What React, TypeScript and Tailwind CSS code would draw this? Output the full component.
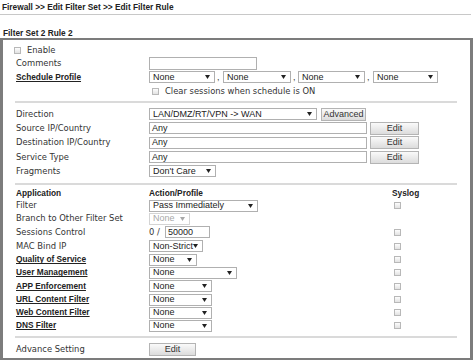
import React from 'react';

const Arrow: React.FC<{ muted?: boolean }> = ({ muted }) => (
  <svg width="5" height="4" viewBox="0 0 5 4" className="shrink-0">
    <path d="M0 0h5L2.5 4z" fill={muted ? '#a8a8a8' : '#222'} />
  </svg>
);

const Select: React.FC<{ value: string; className: string; muted?: boolean }> = ({ value, className, muted }) => (
  <div
    className={`flex items-center justify-between h-[12px] border bg-white pl-[3px] pr-[4px] font-['Liberation_Sans'] text-[9px] leading-none ${
      muted ? 'border-[#d4d4d4] text-[#a8a8a8]' : 'border-[#b0b0b0] text-[#222]'
    } ${className}`}
  >
    <span>{value}</span>
    <Arrow muted={muted} />
  </div>
);

const TextBox: React.FC<{ value?: string; className: string }> = ({ value, className }) => (
  <div
    className={`flex items-center h-[12px] border border-[#b0b0b0] bg-white pl-[2px] font-['Liberation_Sans'] text-[9px] leading-none text-[#222] ${className}`}
  >
    {value}
  </div>
);

const Button: React.FC<{ text: string; className: string }> = ({ text, className }) => (
  <div
    className={`flex items-center justify-center h-[13px] border border-[#b4b4b4] bg-gradient-to-b from-[#fafafa] to-[#dcdcdc] font-['Liberation_Sans'] text-[9px] leading-none text-[#333] ${className}`}
  >
    {text}
  </div>
);

const Check: React.FC = () => (
  <span className="block w-[7px] h-[7px] shrink-0 border border-[#b8b8b8] bg-gradient-to-b from-[#fdfdfd] to-[#e2e2e2]" />
);

const Label: React.FC<{ children: React.ReactNode; strong?: boolean }> = ({ children, strong }) => (
  <div
    className={`w-[133px] shrink-0 ${
      strong ? "font-['Liberation_Sans'] font-bold underline text-[8.3px] text-[#222]" : ''
    }`}
  >
    {children}
  </div>
);

const Row: React.FC<{ h: string; children: React.ReactNode }> = ({ h, children }) => (
  <div className={`flex items-center pl-[13px] ${h}`}>{children}</div>
);

const Divider: React.FC<{ m: string }> = ({ m }) => <div className={`ml-[12px] w-[442px] h-[2px] bg-[#dadada] ${m}`} />;

const Syslog: React.FC = () => (
  <div className="pl-[2px]">
    <Check />
  </div>
);

const appRows: { label: string; strong?: boolean; h: string; control: React.ReactNode; log: boolean }[] = [
  { label: 'Filter', h: 'h-[13px]', control: <Select value="Pass Immediately" className="w-[109px]" />, log: true },
  { label: 'Branch to Other Filter Set', h: 'h-[13px]', control: <Select value="None" muted className="w-[41px]" />, log: false },
  {
    label: 'Sessions Control',
    h: 'h-[14px]',
    control: (
      <div className="flex items-center">
        <span className="w-[16px]">0 /</span>
        <TextBox value="50000" className="w-[45px]" />
      </div>
    ),
    log: true,
  },
  { label: 'MAC Bind IP', h: 'h-[14px]', control: <Select value="Non-Strict" className="w-[54px]" />, log: true },
  { label: 'Quality of Service', strong: true, h: 'h-[13px]', control: <Select value="None" className="w-[48px]" />, log: true },
  { label: 'User Management', strong: true, h: 'h-[13px]', control: <Select value="None" className="w-[88px]" />, log: true },
  { label: 'APP Enforcement', strong: true, h: 'h-[14px]', control: <Select value="None" className="w-[63px]" />, log: true },
  { label: 'URL Content Filter', strong: true, h: 'h-[13px]', control: <Select value="None" className="w-[63px]" />, log: true },
  { label: 'Web Content Filter', strong: true, h: 'h-[13px]', control: <Select value="None" className="w-[63px]" />, log: true },
  { label: 'DNS Filter', strong: true, h: 'h-[13px]', control: <Select value="None" className="w-[63px]" />, log: true },
];

export default function App() {
  return (
    <div className="w-[474px] h-[362px] overflow-hidden bg-white font-['DejaVu_Sans'] text-[8.4px] leading-none text-[#333]">
      {/* Breadcrumb */}
      <div className="h-[14px] pl-[2px] flex items-center font-['Liberation_Sans'] font-bold text-[8.3px] text-[#222]">
        Firewall &gt;&gt; Edit Filter Set &gt;&gt; Edit Filter Rule
      </div>
      <div className="w-[471px] h-px bg-[#c8c8c8]" />
      <div className="h-[23px] pl-[3px] flex items-end pb-[1px] font-['Liberation_Sans'] font-bold text-[8.3px] text-[#222]">
        Filter Set 2 Rule 2
      </div>

      <div className="w-[473px] border-x-[3px] border-y-2 border-[#7c7c7c] pt-[3px] pb-[1px]">
        <div className="flex items-center h-[14px] pl-[11px]">
          <Check />
          <span className="ml-[6px]">Enable</span>
        </div>
        <Row h="h-[13px]">
          <Label>Comments</Label>
          <TextBox className="w-[108px] h-[13px]" />
        </Row>
        <Row h="h-[14px]">
          <Label strong>Schedule Profile</Label>
          <Select value="None" className="w-[66px]" />
          <span className="w-[8px] pl-[2px] font-['Liberation_Sans'] text-[9px]">,</span>
          <Select value="None" className="w-[68px]" />
          <span className="w-[7px] pl-[2px] font-['Liberation_Sans'] text-[9px]">,</span>
          <Select value="None" className="w-[67px]" />
          <span className="w-[8px] pl-[2px] font-['Liberation_Sans'] text-[9px]">,</span>
          <Select value="None" className="w-[65px]" />
        </Row>
        <Row h="h-[14px]">
          <div className="w-[136px] shrink-0" />
          <Check />
          <span className="ml-[6px]">Clear sessions when schedule is ON</span>
        </Row>

        <Divider m="mt-[3px]" />

        <div className="mt-[4px]">
          <Row h="h-[14px]">
            <Label>Direction</Label>
            <Select value="LAN/DMZ/RT/VPN -> WAN" className="w-[168px]" />
            <Button text="Advanced" className="ml-[4px] w-[45px]" />
          </Row>
          {[
            { l: 'Source IP/Country', h: 'h-[14px]' },
            { l: 'Destination IP/Country', h: 'h-[15px]' },
            { l: 'Service Type', h: 'h-[14px]' },
          ].map((r) => (
            <Row key={r.l} h={r.h}>
              <Label>{r.l}</Label>
              <TextBox value="Any" className="w-[218px]" />
              <Button text="Edit" className="ml-[3px] w-[49px]" />
            </Row>
          ))}
          <Row h="h-[14px]">
            <Label>Fragments</Label>
            <Select value="Don't Care" className="w-[67px]" />
          </Row>
        </div>

        <Divider m="mt-[5px]" />

        <div className="mt-[2px]">
          <Row h="h-[12px]">
            <div className="w-[133px] shrink-0 font-['Liberation_Sans'] font-bold text-[8.3px] text-[#222]">Application</div>
            <div className="w-[243px] shrink-0 font-['Liberation_Sans'] font-bold text-[8.3px] text-[#222]">Action/Profile</div>
            <div className="font-['Liberation_Sans'] font-bold text-[8.3px] text-[#222]">Syslog</div>
          </Row>
          {appRows.map((r) => (
            <Row key={r.label} h={r.h}>
              <Label strong={r.strong}>{r.label}</Label>
              <div className="w-[243px] shrink-0 flex items-center">{r.control}</div>
              {r.log && <Syslog />}
            </Row>
          ))}
        </div>

        <Divider m="mt-[4px]" />

        <div className="mt-[3px]">
          <Row h="h-[16px]">
            <Label>Advance Setting</Label>
            <Button text="Edit" className="w-[47px]" />
          </Row>
        </div>
      </div>
    </div>
  );
}
